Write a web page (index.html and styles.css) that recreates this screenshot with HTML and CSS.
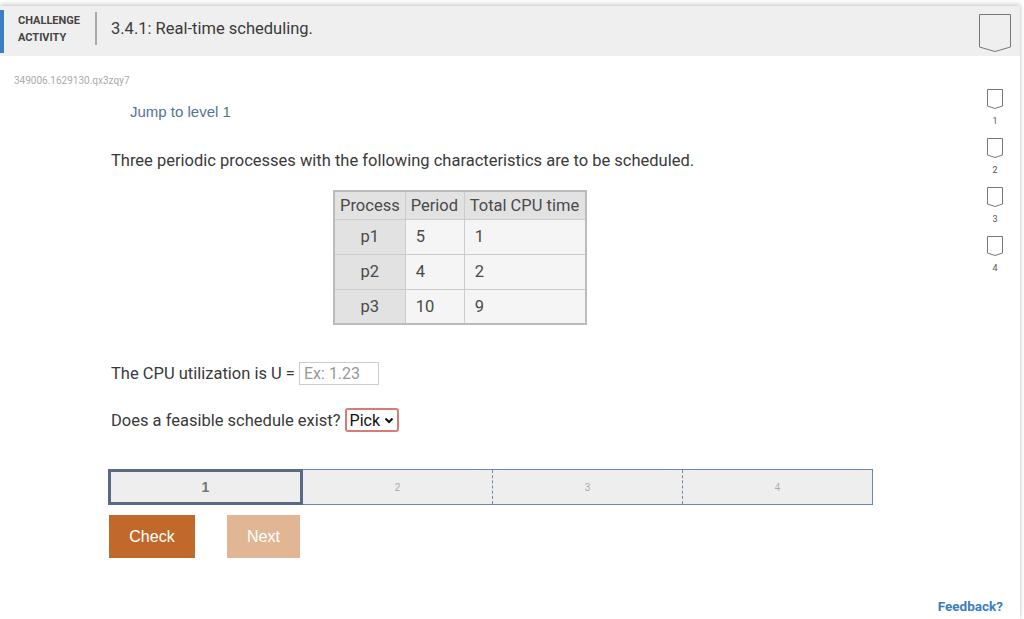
FILE: index.html
```html
<!DOCTYPE HTML>
<html>
<head>
<meta charset="utf-8">
<title>3.4.1: Real-time scheduling.</title>
<link rel="stylesheet" href="styles.css">
</head>
<body>
<div class="page">
	<div class="hdr">
		<div class="hdr-label">CHALLENGE<br>ACTIVITY</div>
		<div class="hdr-title">3.4.1: Real-time scheduling.</div>
		<svg class="hdr-badge" width="34" height="40" viewBox="0 0 34 40"><path d="M1.5 1.5 H32.5 V34 L17 38.5 L1.5 34 Z" fill="none" stroke="#777" stroke-width="1"/></svg>
	</div>
	<div class="body">
		<div class="main">
			<div class="act-id">349006.1629130.qx3zqy7</div>
			<div class="jump">Jump to level 1</div>
			<p class="prompt">Three periodic processes with the following characteristics are to be scheduled.</p>
			<table class="procs">
				<tr><th>Process</th><th>Period</th><th>Total CPU time</th></tr>
				<tr><td class="name">p1</td><td>5</td><td>1</td></tr>
				<tr><td class="name">p2</td><td>4</td><td>2</td></tr>
				<tr><td class="name">p3</td><td>10</td><td>9</td></tr>
			</table>
			<div class="q q-util">The CPU utilization is U =&nbsp;<input type="text" class="ans" placeholder="Ex: 1.23"></div>
			<div class="q q-feas">Does a feasible schedule exist?&nbsp;<span class="pick"><select><option>Pick</option><option>Yes</option><option>No</option></select><svg width="10" height="7" viewBox="0 0 10 7"><path d="M1.5 1.5 L5 5 L8.5 1.5" fill="none" stroke="#111" stroke-width="2"/></svg></span></div>
			<div class="levels">
				<div class="lvl cur">1</div>
				<div class="lvl">2</div>
				<div class="lvl">3</div>
				<div class="lvl">4</div>
			</div>
			<div class="btns">
				<button class="btn check">Check</button>
				<button class="btn next">Next</button>
			</div>
		</div>
		<div class="nav">
			<div class="nav-item"><svg width="18" height="22" viewBox="0 0 18 22"><path d="M1.5 1.5 H16.5 V18 L9 20.5 L1.5 18 Z" fill="none" stroke="#777" stroke-width="1"/></svg><span>1</span></div>
			<div class="nav-item"><svg width="18" height="22" viewBox="0 0 18 22"><path d="M1.5 1.5 H16.5 V18 L9 20.5 L1.5 18 Z" fill="none" stroke="#777" stroke-width="1"/></svg><span>2</span></div>
			<div class="nav-item"><svg width="18" height="22" viewBox="0 0 18 22"><path d="M1.5 1.5 H16.5 V18 L9 20.5 L1.5 18 Z" fill="none" stroke="#777" stroke-width="1"/></svg><span>3</span></div>
			<div class="nav-item"><svg width="18" height="22" viewBox="0 0 18 22"><path d="M1.5 1.5 H16.5 V18 L9 20.5 L1.5 18 Z" fill="none" stroke="#777" stroke-width="1"/></svg><span>4</span></div>
		</div>
	</div>
	<div class="foot"><a href="javascript:;" class="feedback">Feedback?</a></div>
</div>
</body>
</html>
```

FILE: styles.css
```css
* {margin:0; padding:0; box-sizing:border-box;}
body {background:#fff; font-family:Roboto, "Liberation Sans", sans-serif; color:#3a3a3a;}

.page {width:1020px; height:613px; margin-top:6px; background:#fff; box-shadow:0 -2px 5px rgba(0,0,0,0.18), 1px 0 2px rgba(0,0,0,0.08);}

.hdr {display:flex; align-items:center; height:50px; padding-bottom:5px; background:#efefef; position:relative;}
.hdr::before {content:""; position:absolute; left:0; top:4px; bottom:3px; width:4px; background:#3a7ec4;}
.hdr-label {width:97px; padding-left:18px; font-size:11px; font-weight:bold; line-height:17px; color:#444; border-right:2px solid #a9a9a9; height:33px; display:flex; flex-direction:column; justify-content:center;}
.hdr-title {margin-left:14px; font-size:16.5px; color:#3a3a3a;}
.hdr-badge {margin-left:auto; margin-right:8px; margin-top:8px;}

.body {display:flex;}
.main {flex:1; padding-left:108px;}
.act-id {margin:18px 0 0 -94px; font-size:10px; line-height:14px; color:#aaa;}
.jump {margin:14px 0 0 22px; font-family:"Liberation Sans", Arial, sans-serif; font-size:15px; line-height:20px; color:#53739c;}
.prompt {margin:28px 0 0 3px; font-size:16.5px; line-height:22px; color:#3a3a3a;}

.procs {margin:18px 0 0 225px; border-collapse:collapse; border:2px solid #bbb; font-size:16.5px; color:#4a4a4a;}
.procs th, .procs td {border:1px solid #ccc; font-weight:normal; text-align:left; padding:0 5px;}
.procs th {background:#e2e2e2; height:28px;}
.procs td {background:#f5f5f5; height:35px; padding-left:10px;}
.procs th:nth-child(1) {width:71px; text-align:center;}
.procs th:nth-child(2) {width:59px;}
.procs th:nth-child(3) {width:122px;}
.procs td.name {background:#e2e2e2; text-align:center; padding-left:5px;}

.q {display:flex; align-items:center; margin-left:3px; font-size:16.5px; color:#3a3a3a;}
.q-util {margin-top:36px; height:24px;}
.q-feas {margin-top:23px; height:24px;}
.ans {width:80px; height:23px; border:1px solid #ccc; padding:0 4px; font-family:Roboto, sans-serif; font-size:16px; color:#444;}
.ans::placeholder {color:#999;}
.pick {position:relative; display:inline-block;}
.pick select {appearance:none; -webkit-appearance:none; width:54px; height:24px; border:2px solid #d77a7a; border-radius:3px; background:#fff; font-family:Roboto, sans-serif; font-size:16px; color:#111; padding:0 0 0 3px;}
.pick svg {position:absolute; right:5px; top:9px; pointer-events:none;}

.levels {display:flex; width:765px; height:36px; margin-top:37px; background:#eee; border:1px solid #6d88ad; font-family:"Liberation Sans", Arial, sans-serif;}
.lvl {flex:1; display:flex; align-items:center; justify-content:center; font-size:10px; color:#aaa; border-left:1px dashed #6d88ad;}
.lvl:nth-child(2) {border-left:none;}
.lvl.cur {border:3px solid #5a6988; margin:-1px 0 -1px -1px; font-size:14px; font-weight:bold; color:#777;}

.btns {display:flex; gap:32px; margin:10px 0 0 1px;}
.btn {height:43px; border:none; font-family:"Liberation Sans", Arial, sans-serif; font-size:16px; color:#fff;}
.check {width:86px; background:#c0692a;}
.next {width:73px; background:#e0b694;}

.nav {width:50px; display:flex; flex-direction:column; align-items:center; padding-top:32px;}
.nav-item {display:flex; flex-direction:column; align-items:center; height:49px;}
.nav-item span {font-size:9px; color:#555; margin-top:6px;}

.foot {text-align:right; padding:38px 17px 0 0;}
.feedback {font-size:13.5px; font-weight:bold; color:#3a7ec4; text-decoration:none;}
```
